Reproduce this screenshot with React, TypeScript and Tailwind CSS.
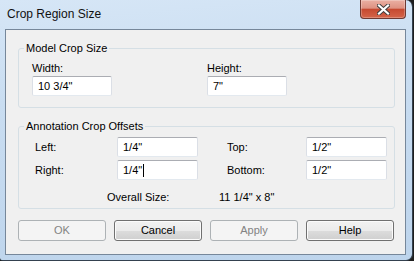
const field =
  "h-[20px] rounded-[2px] border border-t-[#abadb3] border-x-[#dbdfe6] border-b-[#e3e9ef] bg-white pl-[5px] text-[11px] leading-[18px] text-black";

function TextBox({
  value,
  width,
  focused,
}: {
  value: string;
  width: string;
  focused?: boolean;
}) {
  return (
    <div
      className={`${field} ${width} ${
        focused ? "border-[#56799d]" : ""
      } flex items-center`}
    >
      <span>{value}</span>
      {focused && <span className="ml-[1px] h-[13px] w-[1px] bg-black" />}
    </div>
  );
}

function DialogButton({
  label,
  disabled,
}: {
  label: string;
  disabled?: boolean;
}) {
  return (
    <button
      className={
        disabled
          ? "h-[21px] w-[88px] rounded-[3px] border border-[#adb2b5] bg-[#f4f4f4] text-[11px] text-[#838383]"
          : "h-[21px] w-[88px] rounded-[3px] border border-[#707070] bg-[linear-gradient(#f2f2f2_0%,#ebebeb_50%,#dddddd_50%,#cfcfcf_100%)] text-[11px] text-black shadow-[inset_0_0_0_1px_#fbfbfb]"
      }
    >
      {label}
    </button>
  );
}

function GroupBox({
  title,
  children,
}: {
  title: string;
  children: React.ReactNode;
}) {
  return (
    <fieldset className="ml-[12px] mt-[11px] w-[377px] rounded-[3px] border border-[#d5dfe5] p-0">
      <legend className="ml-[5px] px-[2px] text-[11px] leading-[14px] text-black">
        {title}
      </legend>
      {children}
    </fieldset>
  );
}

export default function App() {
  return (
    <div className="h-[261px] w-[414px] overflow-hidden bg-[#1e1e1e] font-['Liberation_Sans',Arial,sans-serif]">
      <div className="flex h-[261px] w-[413px] flex-col rounded-r-[7px] rounded-bl-[3px] border-r border-b border-[#34414f] bg-[linear-gradient(175deg,#d6e6f6_0%,#c9ddf1_35%,#bdd4ec_100%)] pl-[5px] pr-[6px]">
        {/* title bar */}
        <div className="flex h-[29px] items-start justify-between">
          <span className="pl-[2px] pt-[7px] text-[12px] leading-[15px] text-[#111]">
            Crop Region Size
          </span>
          <div className="flex h-[19px] w-[46px] items-center justify-center rounded-b-[4px] border border-t-0 border-[#6e3a33] bg-[linear-gradient(#eab0a3_0%,#de9282_45%,#c64a31_52%,#d4654a_100%)] shadow-[inset_0_0_0_1px_rgba(255,255,255,0.25)]">
            <svg width="13" height="11" viewBox="0 0 13 11">
              <path
                d="M2 1.5 L11 9.5 M11 1.5 L2 9.5"
                stroke="#3c3c3c"
                strokeWidth="4"
                strokeLinecap="square"
              />
              <path
                d="M2 1.5 L11 9.5 M11 1.5 L2 9.5"
                stroke="#ffffff"
                strokeWidth="2.2"
                strokeLinecap="square"
              />
            </svg>
          </div>
        </div>

        {/* client area */}
        <div className="h-[226px] w-[401px] border border-[#76879a] bg-[#f0f0f0] text-[11px] leading-[15px] text-black">
          <GroupBox title="Model Crop Size">
            <div className="flex pb-[11px] pl-[13px] pt-[6px]">
              <div className="w-[175px]">
                <div>Width:</div>
                <TextBox value={'10 3/4"'} width="w-[80px]" />
              </div>
              <div>
                <div>Height:</div>
                <TextBox value={'7"'} width="w-[80px]" />
              </div>
            </div>
          </GroupBox>

          <GroupBox title="Annotation Crop Offsets">
            <div className="pb-[3px] pl-[16px] pt-[4px]">
              <div className="flex items-center">
                <span className="w-[82px]">Left:</span>
                <TextBox value={'1/4"'} width="w-[81px]" />
                <span className="ml-[29px] w-[79px]">Top:</span>
                <TextBox value={'1/2"'} width="w-[81px]" />
              </div>
              <div className="mt-[3px] flex items-center">
                <span className="w-[82px]">Right:</span>
                <TextBox value={'1/4"'} width="w-[81px]" focused />
                <span className="ml-[29px] w-[79px]">Bottom:</span>
                <TextBox value={'1/2"'} width="w-[81px]" />
              </div>
              <div className="mt-[10px] flex">
                <span className="ml-[72px] w-[112px]">Overall Size:</span>
                <span>11 1/4" x 8"</span>
              </div>
            </div>
          </GroupBox>

          <div className="ml-[12px] mt-[11px] flex gap-[8px]">
            <DialogButton label="OK" disabled />
            <DialogButton label="Cancel" />
            <DialogButton label="Apply" disabled />
            <DialogButton label="Help" />
          </div>
        </div>
      </div>
    </div>
  );
}
